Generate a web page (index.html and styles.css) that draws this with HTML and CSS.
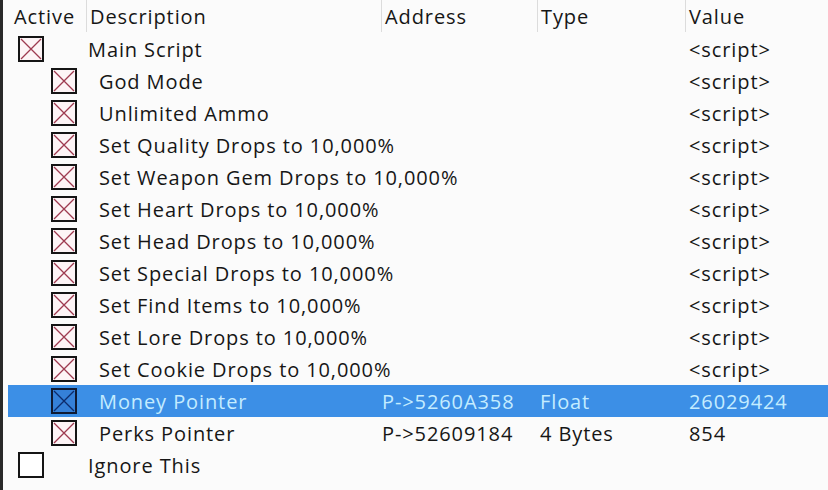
FILE: index.html
```html
<!DOCTYPE html>
<html>
<head>
<meta charset="utf-8">
<link rel="stylesheet" href="styles.css">
</head>
<body>
<div class="table">
  <div class="header">
    <div class="hcell c-active">Active</div>
    <div class="hcell c-desc">Description</div>
    <div class="hcell c-addr">Address</div>
    <div class="hcell c-type">Type</div>
    <div class="hcell c-val">Value</div>
  </div>
  <div class="rows">
    <div class="row top"><span class="cb"><svg viewBox="0 0 26 26"><rect x="1" y="1" width="24" height="24"/><path d="M3 3L23 23M23 3L3 23"/></svg></span><span class="desc">Main Script</span><span class="addr"></span><span class="type"></span><span class="val">&lt;script&gt;</span></div>
    <div class="row child"><span class="cb"><svg viewBox="0 0 26 26"><rect x="1" y="1" width="24" height="24"/><path d="M3 3L23 23M23 3L3 23"/></svg></span><span class="desc">God Mode</span><span class="addr"></span><span class="type"></span><span class="val">&lt;script&gt;</span></div>
    <div class="row child"><span class="cb"><svg viewBox="0 0 26 26"><rect x="1" y="1" width="24" height="24"/><path d="M3 3L23 23M23 3L3 23"/></svg></span><span class="desc">Unlimited Ammo</span><span class="addr"></span><span class="type"></span><span class="val">&lt;script&gt;</span></div>
    <div class="row child"><span class="cb"><svg viewBox="0 0 26 26"><rect x="1" y="1" width="24" height="24"/><path d="M3 3L23 23M23 3L3 23"/></svg></span><span class="desc">Set Quality Drops to 10,000%</span><span class="addr"></span><span class="type"></span><span class="val">&lt;script&gt;</span></div>
    <div class="row child"><span class="cb"><svg viewBox="0 0 26 26"><rect x="1" y="1" width="24" height="24"/><path d="M3 3L23 23M23 3L3 23"/></svg></span><span class="desc">Set Weapon Gem Drops to 10,000%</span><span class="addr"></span><span class="type"></span><span class="val">&lt;script&gt;</span></div>
    <div class="row child"><span class="cb"><svg viewBox="0 0 26 26"><rect x="1" y="1" width="24" height="24"/><path d="M3 3L23 23M23 3L3 23"/></svg></span><span class="desc">Set Heart Drops to 10,000%</span><span class="addr"></span><span class="type"></span><span class="val">&lt;script&gt;</span></div>
    <div class="row child"><span class="cb"><svg viewBox="0 0 26 26"><rect x="1" y="1" width="24" height="24"/><path d="M3 3L23 23M23 3L3 23"/></svg></span><span class="desc">Set Head Drops to 10,000%</span><span class="addr"></span><span class="type"></span><span class="val">&lt;script&gt;</span></div>
    <div class="row child"><span class="cb"><svg viewBox="0 0 26 26"><rect x="1" y="1" width="24" height="24"/><path d="M3 3L23 23M23 3L3 23"/></svg></span><span class="desc">Set Special Drops to 10,000%</span><span class="addr"></span><span class="type"></span><span class="val">&lt;script&gt;</span></div>
    <div class="row child"><span class="cb"><svg viewBox="0 0 26 26"><rect x="1" y="1" width="24" height="24"/><path d="M3 3L23 23M23 3L3 23"/></svg></span><span class="desc">Set Find Items to 10,000%</span><span class="addr"></span><span class="type"></span><span class="val">&lt;script&gt;</span></div>
    <div class="row child"><span class="cb"><svg viewBox="0 0 26 26"><rect x="1" y="1" width="24" height="24"/><path d="M3 3L23 23M23 3L3 23"/></svg></span><span class="desc">Set Lore Drops to 10,000%</span><span class="addr"></span><span class="type"></span><span class="val">&lt;script&gt;</span></div>
    <div class="row child"><span class="cb"><svg viewBox="0 0 26 26"><rect x="1" y="1" width="24" height="24"/><path d="M3 3L23 23M23 3L3 23"/></svg></span><span class="desc">Set Cookie Drops to 10,000%</span><span class="addr"></span><span class="type"></span><span class="val">&lt;script&gt;</span></div>
    <div class="row child selected"><span class="cb"><svg viewBox="0 0 26 26"><rect x="1" y="1" width="24" height="24"/><path d="M3 3L23 23M23 3L3 23"/></svg></span><span class="desc">Money Pointer</span><span class="addr">P-&gt;5260A358</span><span class="type">Float</span><span class="val">26029424</span></div>
    <div class="row child"><span class="cb"><svg viewBox="0 0 26 26"><rect x="1" y="1" width="24" height="24"/><path d="M3 3L23 23M23 3L3 23"/></svg></span><span class="desc">Perks Pointer</span><span class="addr">P-&gt;52609184</span><span class="type">4 Bytes</span><span class="val">854</span></div>
    <div class="row top unchecked"><span class="cb"><svg viewBox="0 0 26 26"><rect x="1" y="1" width="24" height="24"/></svg></span><span class="desc">Ignore This</span><span class="addr"></span><span class="type"></span><span class="val"></span></div>
  </div>
</div>
</body>
</html>
```
FILE: styles.css
```css
html, body {
  margin: 0;
  padding: 0;
  background: #fbfbfb;
}
body {
  width: 828px;
  height: 490px;
  overflow: hidden;
  font-family: "Open Sans", "Noto Sans", sans-serif;
  font-size: 20px;
  letter-spacing: 0.9px;
  color: #161616;
}
.table {
  height: 490px;
  border-left: 3px solid #2a2a2a;
  background: #fbfbfb;
}
.header {
  display: grid;
  grid-template-columns: 83px 295px 156px 148px 1fr;
  height: 33px;
}
.hcell {
  display: flex;
  align-items: center;
  padding-left: 3px;
  border-left: 1px solid #dcdcdc;
  height: 32px;
}
.hcell.c-active {
  border-left: none;
  padding-left: 11px;
}
.rows {
  display: flex;
  flex-direction: column;
}
.row {
  display: grid;
  grid-template-columns: 83px 295px 156px 148px 1fr;
  height: 32px;
  align-items: center;
  margin-left: 5px;
}
.row .cb {
  width: 26px;
  height: 26px;
  display: block;
}
.row.top .cb { margin-left: 10px; }
.row.child .cb { margin-left: 43px; }
.cb svg {
  width: 26px;
  height: 26px;
  display: block;
}
.cb rect {
  fill: #fdf4f6;
  stroke: #151515;
  stroke-width: 2;
}
.cb path {
  stroke: #9e3a50;
  stroke-width: 1.3;
  fill: none;
}
.row .desc {
  white-space: nowrap;
  margin-left: -3px;
}
.row.child .desc { margin-left: 8px; }
.row .addr { margin-left: -4px; white-space: nowrap; }
.row .type { margin-left: -2px; }
.row .val { margin-left: -1px; }
.row.selected {
  background: #3c8fe6;
  color: #c4ecff;
}
.row.selected .cb rect {
  fill: #3580d8;
  stroke: #0f1a33;
}
.row.selected .cb path {
  stroke: #0d2a6a;
}
.row.unchecked .cb rect {
  fill: #ffffff;
}
```
